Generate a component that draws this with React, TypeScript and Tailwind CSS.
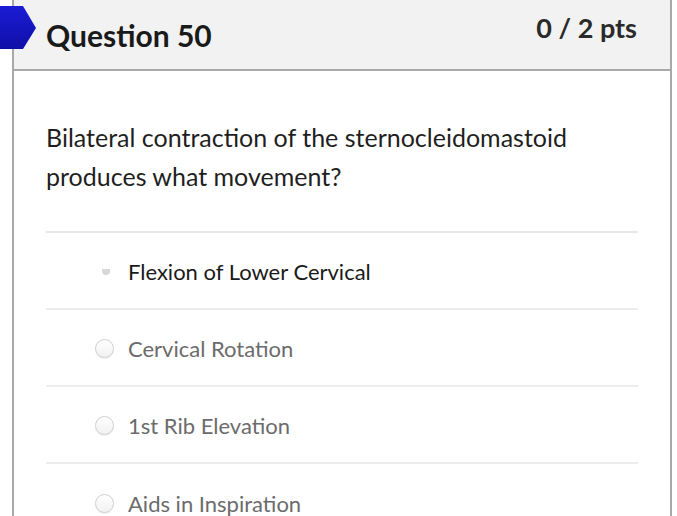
import React from "react";

const answers = [
  { text: "Flexion of Lower Cervical", selected: true },
  { text: "Cervical Rotation" },
  { text: "1st Rib Elevation" },
  { text: "Aids in Inspiration" },
];

export default function App() {
  return (
    <div className="relative w-[677px] h-[516px] bg-white overflow-hidden" style={{ fontFamily: "Lato, 'Open Sans', sans-serif" }}>
      <div className="ml-[12px] w-[660px] h-[516px] border-l-2 border-r-2 border-[#a9a9a9]">
        <div className="h-[71px] bg-[#f2f2f2] border-b-2 border-[#a9a9a9] flex justify-between pl-[32px] pr-[33px]">
          <div className="pt-[18px] text-[30px] font-bold text-[#1a1a1a] leading-[34px]">Question 50</div>
          <div className="pt-[11px] text-[27px] font-bold text-[#2a2a2a] leading-[34px]">0 / 2 pts</div>
        </div>
      </div>
      <div className="absolute left-0 top-0 w-full">
        <div className="ml-[14px] w-[656px]">
          <div className="h-[71px]" />
          <div className="px-[32px]">
            <p className="pt-[47px] text-[25px] leading-[39px] text-[#1f1f1f]">
              Bilateral contraction of the sternocleidomastoid produces what movement?
            </p>
            <div className="mt-[35px] border-t-2 border-[#e6e6e6]" />
            {answers.map((a, i) => (
              <div key={i} className={`h-[77px] pt-[2px] flex items-center ${i < answers.length - 1 ? "border-b-2 border-[#ececec]" : ""}`}>
                <div className="w-[82px] flex justify-end pr-[14px]">
                  {a.selected ? (
                    <div className="w-[8px] h-[6px] rounded-b-full bg-[#d8d8d8] mr-[4px]" />
                  ) : (
                    <div className="w-[19px] h-[19px] rounded-full border border-[#d0d0d0] bg-gradient-to-b from-[#ffffff] to-[#f1f1f1] shadow-[0_1px_1px_rgba(0,0,0,0.08)]" />
                  )}
                </div>
                <span className={`text-[22px] ${a.selected ? "text-[#1a1a1a]" : "text-[#6b6b6b]"}`}>{a.text}</span>
              </div>
            ))}
          </div>
        </div>
      </div>
      <svg className="absolute left-0 top-[5px]" width="38" height="46" viewBox="0 0 38 46">
        <defs>
          <linearGradient id="g" x1="0" y1="0" x2="0" y2="1">
            <stop offset="0" stopColor="#1c1cd6" />
            <stop offset="1" stopColor="#0f0fa8" />
          </linearGradient>
        </defs>
        <polygon points="0,1 23,1 36,23 23,44 0,44" fill="url(#g)" />
      </svg>
    </div>
  );
}
